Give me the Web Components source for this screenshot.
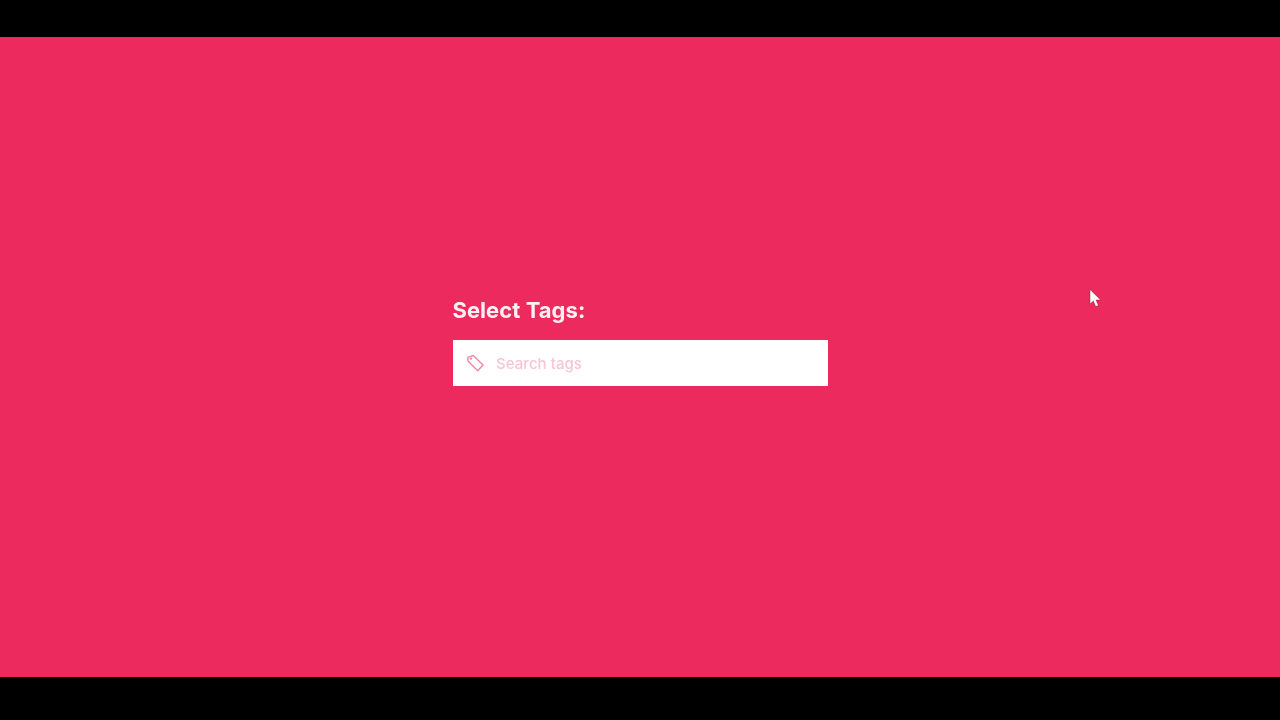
<!DOCTYPE html>
<html><head><meta charset="utf-8"><style>
html,body{margin:0;height:100%;background:#000}
body{display:flex;flex-direction:column;overflow:hidden}
</style></head><body>
<video-frame>
  <tag-select label="Select Tags:" placeholder="Search tags"></tag-select>
  <demo-cursor slot="overlay"></demo-cursor>
</video-frame>
<script>
class VideoFrame extends HTMLElement{constructor(){super();this.attachShadow({mode:'open'}).innerHTML=`<style>
:host{display:block;height:720px;box-sizing:border-box;padding:37px 0 43px;background:#000}
.stage{position:relative;height:100%;background:#ed2a5d;display:flex;justify-content:center;padding-top:258px;box-sizing:border-box}
</style><div class="stage"><slot></slot><slot name="overlay"></slot></div>`}}
class TagSelect extends HTMLElement{constructor(){super();this.attachShadow({mode:'open'}).innerHTML=`<style>
:host{display:block;width:375px;font-family:Inter,"Liberation Sans",sans-serif;filter:blur(.35px)}
label{display:block;color:#fdf0f3;font-size:22px;font-weight:700;line-height:30px;margin-bottom:15px;letter-spacing:.05px}
.box{height:46px;background:#fff;display:flex;align-items:center;padding-left:13px;gap:12.5px;box-sizing:border-box}
svg{width:18px;height:18px;flex:none}
span{color:#f8c5d5;font-size:15px;font-weight:500;letter-spacing:.05px}
</style><label></label><div class="box"><svg viewBox="0 0 18 18" fill="none" stroke="#ee88a3" stroke-width="1.4" stroke-linejoin="round"><path d="M2 3.3 7.3 1.4 17 11 11.7 16.8 2 6.9Z"/><circle cx="5" cy="4.6" r="1.2" fill="#ee88a3" stroke="none"/></svg><span></span></div>`;
this.shadowRoot.querySelector('label').textContent=this.getAttribute('label');
this.shadowRoot.querySelector('span').textContent=this.getAttribute('placeholder');}}
class DemoCursor extends HTMLElement{constructor(){super();this.attachShadow({mode:'open'}).innerHTML=`<style>
:host{position:absolute;left:1089px;top:252px;width:12px;height:19px;display:block;filter:blur(.3px)}
svg{display:block}
</style><svg width="12" height="19" viewBox="0 0 12 19"><path d="M1 .5V15L4.3 12 6.7 17.6 9.4 16.4 7 11H11.6Z" fill="#fff" stroke="#7a1530" stroke-width=".7" stroke-opacity=".6"/></svg>`}}
customElements.define('video-frame',VideoFrame);
customElements.define('tag-select',TagSelect);
customElements.define('demo-cursor',DemoCursor);
</script></body></html>
